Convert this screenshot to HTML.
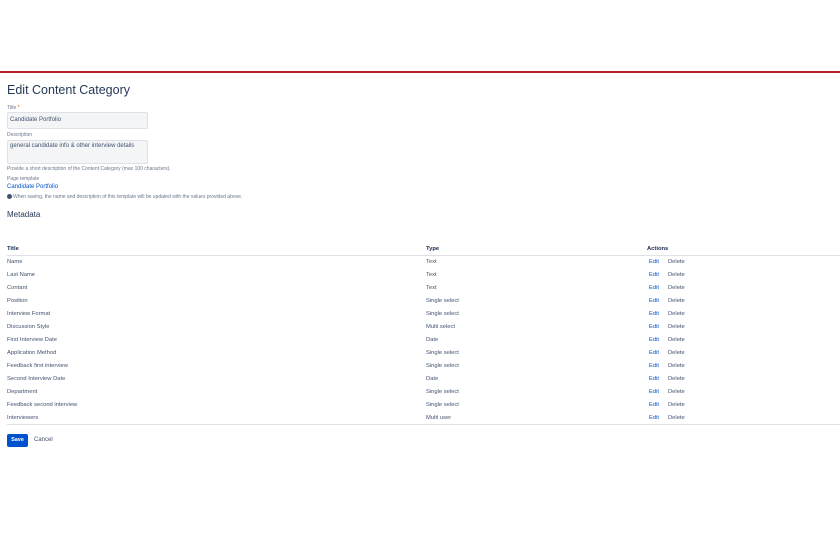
<!DOCTYPE html>
<html><head><style>
*{margin:0;padding:0;box-sizing:border-box}
body{width:840px;height:540px;background:#fff;font-family:"Liberation Sans",sans-serif;color:#172b4d;position:relative;overflow:hidden}
.a{position:absolute;white-space:nowrap}
.s{font-size:5px;color:#6b778c}
.t{font-size:6px;color:#42526e}
.box{position:absolute;background:#f4f5f7;border:1px solid #dfe1e6;border-radius:2px}
.row{position:absolute;left:7px;width:833px;font-size:5.8px;color:#42526e;height:13px}
.row span{position:absolute;top:0}
.blue{color:#0052cc}
</style></head><body>
<div class="a" style="left:0;top:71px;width:840px;height:2px;background:#b5232e"></div>
<div class="a" style="left:7px;top:83px;font-size:12.5px;color:#253858">Edit Content Category</div>
<div class="a s" style="left:7px;top:105px">Title <span style="color:#de350b">*</span></div>
<div class="box" style="left:7px;top:112px;width:141px;height:17px"></div>
<div class="a t" style="left:10px;top:117px">Candidate Portfolio</div>
<div class="a s" style="left:7px;top:132px">Description</div>
<div class="box" style="left:7px;top:140px;width:141px;height:24px"></div>
<div class="a t" style="left:10px;top:143px">general candidate info &amp; other interview details</div>
<div class="a s" style="left:7px;top:166px">Provide a short description of the Content Category (max 100 characters).</div>
<div class="a s" style="left:7px;top:176px">Page template</div>
<div class="a t blue" style="left:7px;top:184px">Candidate Portfolio</div>
<div class="a s" style="left:7px;top:194px"><span style="display:inline-block;width:5px;height:5px;border-radius:50%;background:#42526e;vertical-align:-1px;margin-right:1px"></span>When saving, the name and description of this template will be updated with the values provided above.</div>
<div class="a" style="left:7px;top:210px;font-size:8px;color:#253858">Metadata</div>
<div class="row" style="top:246px;color:#172b4d;font-weight:bold"><span style="left:0">Title</span><span style="left:419px">Type</span><span style="left:640px">Actions</span></div>
<div class="a" style="left:7px;top:255px;width:833px;height:1px;background:#dfe1e6"></div>
<div class="a" style="left:7px;top:424px;width:833px;height:1px;background:#dfe1e6"></div>
<div class="a" style="left:7px;top:434px;width:21px;height:13px;background:#0052cc;border-radius:2px;color:#fff;font-size:5.5px;text-align:center;line-height:13px;font-weight:bold">Save</div>
<div class="a t" style="left:34px;top:437px">Cancel</div>
<div class="row" style="top:259px"><span style="left:0">Name</span><span style="left:419px">Text</span><span class="blue" style="left:642px">Edit</span><span style="left:661px">Delete</span></div>
<div class="row" style="top:272px"><span style="left:0">Last Name</span><span style="left:419px">Text</span><span class="blue" style="left:642px">Edit</span><span style="left:661px">Delete</span></div>
<div class="row" style="top:285px"><span style="left:0">Contant</span><span style="left:419px">Text</span><span class="blue" style="left:642px">Edit</span><span style="left:661px">Delete</span></div>
<div class="row" style="top:298px"><span style="left:0">Position</span><span style="left:419px">Single select</span><span class="blue" style="left:642px">Edit</span><span style="left:661px">Delete</span></div>
<div class="row" style="top:311px"><span style="left:0">Interview Format</span><span style="left:419px">Single select</span><span class="blue" style="left:642px">Edit</span><span style="left:661px">Delete</span></div>
<div class="row" style="top:324px"><span style="left:0">Discussion Style</span><span style="left:419px">Multi select</span><span class="blue" style="left:642px">Edit</span><span style="left:661px">Delete</span></div>
<div class="row" style="top:337px"><span style="left:0">First Interview Date</span><span style="left:419px">Date</span><span class="blue" style="left:642px">Edit</span><span style="left:661px">Delete</span></div>
<div class="row" style="top:350px"><span style="left:0">Application Method</span><span style="left:419px">Single select</span><span class="blue" style="left:642px">Edit</span><span style="left:661px">Delete</span></div>
<div class="row" style="top:363px"><span style="left:0">Feedback first interview</span><span style="left:419px">Single select</span><span class="blue" style="left:642px">Edit</span><span style="left:661px">Delete</span></div>
<div class="row" style="top:376px"><span style="left:0">Second Interview Date</span><span style="left:419px">Date</span><span class="blue" style="left:642px">Edit</span><span style="left:661px">Delete</span></div>
<div class="row" style="top:389px"><span style="left:0">Department</span><span style="left:419px">Single select</span><span class="blue" style="left:642px">Edit</span><span style="left:661px">Delete</span></div>
<div class="row" style="top:402px"><span style="left:0">Feedback second interview</span><span style="left:419px">Single select</span><span class="blue" style="left:642px">Edit</span><span style="left:661px">Delete</span></div>
<div class="row" style="top:415px"><span style="left:0">Interviewers</span><span style="left:419px">Multi user</span><span class="blue" style="left:642px">Edit</span><span style="left:661px">Delete</span></div>
</body></html>
